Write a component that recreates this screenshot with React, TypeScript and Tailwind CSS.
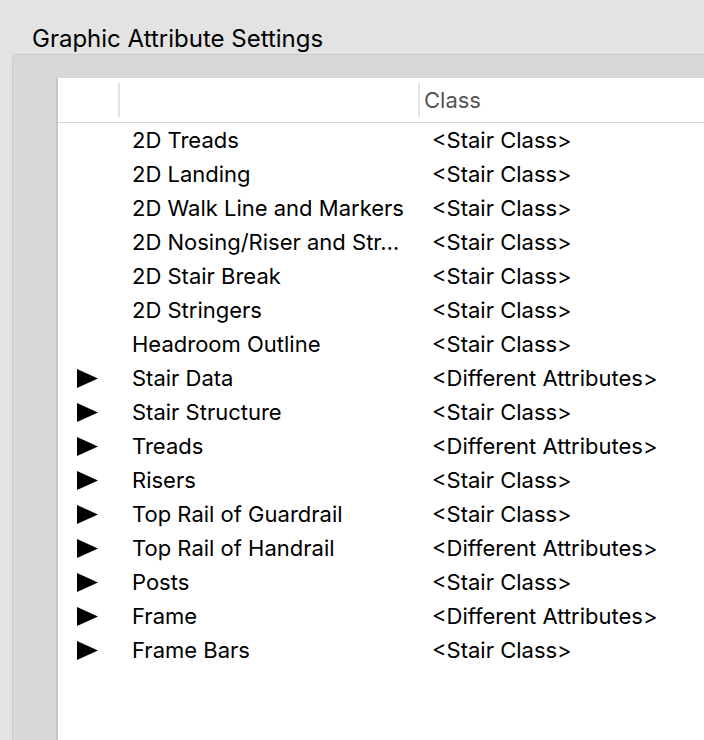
import React from "react";

const rows: { name: string; cls: string; arrow: boolean }[] = [
  { name: "2D Treads", cls: "<Stair Class>", arrow: false },
  { name: "2D Landing", cls: "<Stair Class>", arrow: false },
  { name: "2D Walk Line and Markers", cls: "<Stair Class>", arrow: false },
  { name: "2D Nosing/Riser and Str…", cls: "<Stair Class>", arrow: false },
  { name: "2D Stair Break", cls: "<Stair Class>", arrow: false },
  { name: "2D Stringers", cls: "<Stair Class>", arrow: false },
  { name: "Headroom Outline", cls: "<Stair Class>", arrow: false },
  { name: "Stair Data", cls: "<Different Attributes>", arrow: true },
  { name: "Stair Structure", cls: "<Stair Class>", arrow: true },
  { name: "Treads", cls: "<Different Attributes>", arrow: true },
  { name: "Risers", cls: "<Stair Class>", arrow: true },
  { name: "Top Rail of Guardrail", cls: "<Stair Class>", arrow: true },
  { name: "Top Rail of Handrail", cls: "<Different Attributes>", arrow: true },
  { name: "Posts", cls: "<Stair Class>", arrow: true },
  { name: "Frame", cls: "<Different Attributes>", arrow: true },
  { name: "Frame Bars", cls: "<Stair Class>", arrow: true },
];

export default function App() {
  return (
    <div
      className="w-[704px] h-[740px] bg-[#e3e3e3] overflow-hidden flex flex-col text-black"
      style={{ fontFamily: "Inter, 'Liberation Sans', sans-serif" }}
    >
      <div className="h-[54px] shrink-0 pl-[32px] pt-[27px] text-[24px] leading-[24px] whitespace-nowrap">
        Graphic Attribute Settings
      </div>
      <div className="flex-1 ml-[12px] rounded-tl-[6px] border-t border-l border-[#cacaca] bg-[#d8d8d8] pt-[23px] pl-[43px] flex flex-col">
        <div className="flex-1 bg-white border-l-2 border-[#c5c5c5] flex flex-col">
          <div className="h-[45px] shrink-0 flex items-center border-b border-[#d6d6d6]">
            <div className="w-[60px]" />
            <div className="w-[2px] h-[34px] bg-[#e2e2e2]" />
            <div className="w-[298px]" />
            <div className="w-[2px] h-[34px] bg-[#e2e2e2]" />
            <div className="pl-[4px] text-[22px] text-[#555555]">Class</div>
          </div>
          {rows.map((r) => (
            <div key={r.name} className="h-[34px] shrink-0 flex items-center text-[22px]">
              <div className="w-[62px] flex items-center pl-[19px]">
                {r.arrow && (
                  <svg width="21" height="19" viewBox="0 0 21 19">
                    <polygon points="0,0 21,9.5 0,19" fill="#000" />
                  </svg>
                )}
              </div>
              <div className="w-[300px] pl-[12px] whitespace-nowrap">{r.name}</div>
              <div className="pl-[12px] whitespace-nowrap">{r.cls}</div>
            </div>
          ))}
        </div>
      </div>
    </div>
  );
}
